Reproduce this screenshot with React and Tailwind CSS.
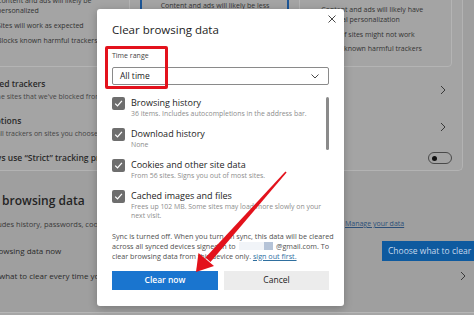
import React from "react";

function Chevron({ className = "" }) {
  return (
    <svg width="6" height="10" viewBox="0 0 6 10" className={className}>
      <path d="M1 1 L5 5 L1 9" fill="none" stroke="#3a3a3a" strokeWidth="1" />
    </svg>
  );
}

function Check() {
  return (
    <div className="w-[13px] h-[13px] rounded-[2px] bg-[#6e6e6e] flex items-center justify-center shrink-0">
      <svg width="9" height="9" viewBox="0 0 9 9">
        <path d="M1.2 4.6 L3.5 6.9 L7.9 1.9" fill="none" stroke="#ffffff" strokeWidth="1.3" />
      </svg>
    </div>
  );
}

function Item({ label, sub }) {
  return (
    <div className="flex gap-[6px]">
      <div><Check /></div>
      <div className="flex flex-col -mt-[0.5px]">
        <div className="text-[9px] leading-[12px] text-[#1c1c1c] whitespace-nowrap">{label}</div>
        <div className="text-[6.9px] leading-[9.5px] text-[#8d8d8d] whitespace-nowrap">{sub}</div>
      </div>
    </div>
  );
}

export default function App() {
  return (
    <div className="relative w-[474px] h-[315px] overflow-hidden bg-[#9f9f9f] font-['Open_Sans',sans-serif] text-[#2c2c2c]">
      {/* Background settings page (dimmed) */}
      <div className="flex flex-col ml-[-31px] w-[509px]">
        {/* Tracking prevention container */}
        <div className="w-[494px] bg-[#a4a4a4] border-r border-b border-[#b3b3b3] rounded-b-[5px] pl-[8px] pr-[10px] pb-[6px] flex flex-col">
          <div className="flex gap-[10px] mt-[-14px] h-[81px]">
            <div className="w-[153px] h-full border border-[#b4b4b4] rounded-[4px] pl-[19px] pt-[9px] text-[7px] leading-[9.5px] text-[#333] overflow-hidden whitespace-nowrap">
              <div>Content and ads will likely be</div>
              <div>personalized</div>
              <div className="mt-[5.5px]">Sites will work as expected</div>
              <div className="mt-[5.5px]">Blocks known harmful trackers</div>
            </div>
            <div className="w-[150px] h-full border-2 border-[#1d5696] rounded-[4px] pl-[19px] pt-[13px] text-[7px] leading-[9.5px] text-[#333] overflow-hidden whitespace-nowrap">
              <div>Content and ads will likely be less</div>
            </div>
            <div className="w-[153px] h-full border border-[#b4b4b4] rounded-[4px] pl-[21px] pt-[18px] text-[7px] leading-[9.5px] text-[#333] overflow-hidden whitespace-nowrap">
              <div>Content and ads will likely have</div>
              <div>minimal personalization</div>
              <div className="mt-[5.5px]">Parts of sites might not work</div>
              <div className="mt-[5px]">Blocks known harmful trackers</div>
            </div>
          </div>

          <div className="flex items-center justify-between mt-[11px] pr-[6px]">
            <div className="flex flex-col gap-[2px]">
              <div className="text-[8.5px] leading-[12px] font-semibold text-[#2a2a2a] whitespace-nowrap">Blocked trackers</div>
              <div className="text-[7px] leading-[10px] text-[#444] whitespace-nowrap">View the sites that we've blocked from tracking you</div>
            </div>
            <Chevron />
          </div>
          <div className="flex items-center justify-between mt-[13px] pr-[6px]">
            <div className="flex flex-col gap-[2px]">
              <div className="text-[8.5px] leading-[12px] font-semibold text-[#2a2a2a] whitespace-nowrap">Exceptions</div>
              <div className="text-[7px] leading-[10px] text-[#444] whitespace-nowrap">Allow all trackers on sites you choose</div>
            </div>
            <Chevron />
          </div>
          <div className="flex items-center justify-between mt-[13px]">
            <div className="text-[8.5px] leading-[12px] font-semibold text-[#2a2a2a] whitespace-nowrap">Always use “Strict” tracking prevention when browsing InPrivate</div>
            <div className="w-[24px] h-[12px] rounded-full border border-[#4a4a4a] flex items-center pl-[3px]">
              <div className="w-[5px] h-[5px] rounded-full bg-[#111]" />
            </div>
          </div>
        </div>

        {/* Clear browsing data section */}
        <div className="mt-[22px] text-[12px] leading-[16px] font-semibold text-[#242424] whitespace-nowrap">Clear browsing data</div>
        <div className="mt-[10px] flex items-center text-[7.5px] leading-[10px] whitespace-nowrap">
          <span className="w-[376px] overflow-hidden text-[#3a3a3a]">This includes history, passwords, cookies, and more. Only data from this profile will be deleted.</span>
          <span className="text-[7px] text-[#2d4f78] underline">Manage your data</span>
        </div>
        <div className="mt-[12px] flex items-center justify-between h-[20px]">
          <span className="text-[8px] leading-[12px] font-medium text-[#2a2a2a] whitespace-nowrap">Clear browsing data now</span>
          <div className="w-[96px] h-[20px] bg-[#0e5a9f] text-[#c7d8ec] text-[8.5px] flex items-center pl-[6px] whitespace-nowrap">Choose what to clear</div>
        </div>
        <div className="mt-[9px] flex items-center justify-between h-[12px] pr-[12px]">
          <span className="text-[8px] leading-[12px] font-medium text-[#2a2a2a] whitespace-nowrap">Choose what to clear every time you close the browser</span>
          <Chevron />
        </div>
        <div className="mt-[30px] border-t border-[#b6b6b6] bg-[#a6a6a6] h-[10px] w-[540px]" />
      </div>

      {/* Dialog */}
      <div className="absolute left-[97px] top-[9px] w-[247px] h-[297px] bg-white rounded-[3px] shadow-[0_2px_8px_rgba(0,0,0,0.25)] px-[15px] pt-[13px] flex flex-col">
        <svg className="absolute left-[231px] top-[6px]" width="8" height="8" viewBox="0 0 8 8">
          <path d="M0.5 0.5 L7.5 7.5 M7.5 0.5 L0.5 7.5" stroke="#333" strokeWidth="0.9" />
        </svg>
        <div className="text-[11.5px] leading-[16px] font-medium text-[#1d1d1d] whitespace-nowrap">Clear browsing data</div>
        <div className="mt-[13px] text-[7px] leading-[10px] text-[#444]">Time range</div>
        <div className="mt-[6px] h-[18px] border border-[#8a8a8a] rounded-[2px] flex items-center justify-between pl-[7px] pr-[9px]">
          <span className="text-[8.5px] text-[#222]">All time</span>
          <svg width="8" height="5" viewBox="0 0 8 5">
            <path d="M0.5 0.5 L4 4 L7.5 0.5" fill="none" stroke="#333" strokeWidth="0.9" />
          </svg>
        </div>
        <div className="mt-[12px] flex justify-between">
          <div className="flex flex-col gap-[10px]">
            <Item label="Browsing history" sub="36 items. Includes autocompletions in the address bar." />
            <Item label="Download history" sub="None" />
            <Item label="Cookies and other site data" sub="From 56 sites. Signs you out of most sites." />
            <Item
              label="Cached images and files"
              sub={<>Frees up 102 MB. Some sites may load more slowly on your<br />next visit.</>}
            />
          </div>
          <div className="w-[3px] h-[53px] rounded-full bg-[#8a8a8a]" />
        </div>
        <div className="mt-[10px] text-[7.2px] leading-[10px] text-[#505050] whitespace-nowrap flex flex-col">
          <div className="h-[10px]">Sync is turned off. When you turn on sync, this data will be cleared</div>
          <div className="h-[10px] flex items-center">
            <span>across all synced devices signed in to</span>
            <span className="inline-block w-[27px] h-[8px] bg-[#f1f4f8] ml-[3px]" />
            <span className="inline-block w-[10px] h-[8px] bg-[#b5c3d7]" />
            <span className="ml-[3px]">@gmail.com. To</span>
          </div>
          <div className="h-[10px]">clear browsing data from this device only. <span className="text-[#2f6f9f] underline">sign out first.</span></div>
        </div>
        <div className="mt-[10px] flex gap-[6px]">
          <div className="w-[106px] h-[19px] bg-[#1a75cf] text-white text-[8.5px] font-semibold flex items-center justify-center">Clear now</div>
          <div className="w-[105px] h-[19px] bg-[#ececec] text-[#222] text-[8.5px] font-medium flex items-center justify-center">Cancel</div>
        </div>
      </div>

      {/* Red highlight box */}
      <div className="absolute left-[105px] top-[46px] w-[63px] h-[43px] border-[3px] border-[#e3121c] rounded-[2px]" />

      {/* Red arrow */}
      <svg className="absolute inset-0 pointer-events-none" width="474" height="315" viewBox="0 0 474 315">
        <polygon points="285.4,171.6 286.6,172.6 210.5,262 205.5,257.5" fill="#e3121c" />
        <polygon points="196,272 198.5,253 214,266" fill="#e3121c" />
      </svg>
    </div>
  );
}
